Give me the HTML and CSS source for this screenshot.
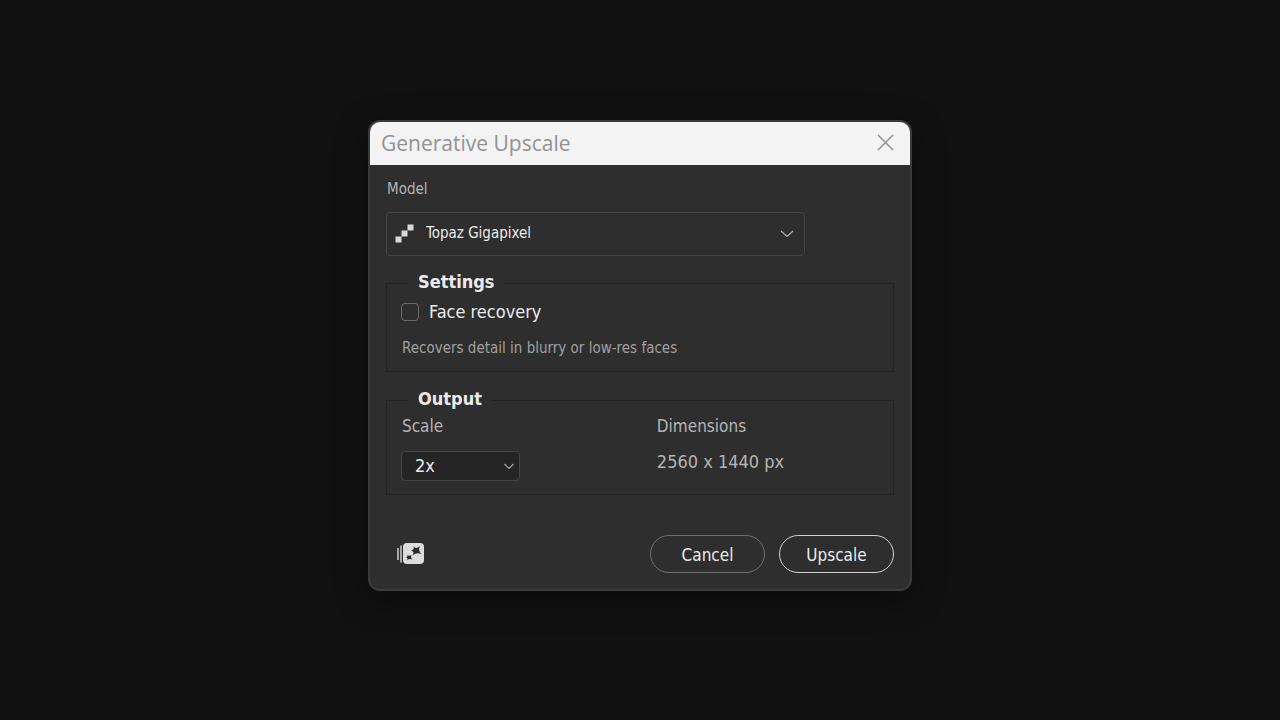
FILE: index.html
```html
<!DOCTYPE html>
<html lang="en">
<head>
  <meta charset="UTF-8">
  <meta name="viewport" content="width=device-width, initial-scale=1.0">
  <title>Generative Upscale</title>
  <link rel="stylesheet" href="styles.css">
</head>
<body>
  <form class="dialog" role="dialog" aria-labelledby="dialog-title">
    <div class="titlebar">
      <h1 id="dialog-title">Generative Upscale</h1>
      <button type="button" class="close" aria-label="Close">
        <svg width="17" height="17" viewBox="0 0 17 17"><path d="M1 1L16 16M16 1L1 16" fill="none" stroke="#929292" stroke-width="1.5"/></svg>
      </button>
    </div>
    <div class="content">
      <label class="model-label" for="model">Model</label>
      <div class="select model">
        <svg class="model-icon" width="20" height="20" viewBox="0 0 20 20" fill="#d8d8d8"><path d="M.5 13.5h6v6h-6zM6.5 7.500h6v6h-6zM12.500 1.500h6v6h-6z"/></svg>
        <select id="model">
          <option>Topaz Gigapixel</option>
        </select>
        <svg class="arrow" width="14" height="8" viewBox="0 0 14 8"><path d="M1 1L7 6.500L13 1" fill="none" stroke="#b4b4b4" stroke-width="1.1"/></svg>
      </div>

      <fieldset class="settings">
        <legend>Settings</legend>
        <div class="check">
          <input type="checkbox" id="face">
          <label for="face">Face recovery</label>
        </div>
        <p class="hint">Recovers detail in blurry or low-res faces</p>
      </fieldset>

      <fieldset class="output">
        <legend>Output</legend>
        <div class="columns">
          <div>
            <label for="scale">Scale</label>
            <div class="select scale">
              <select id="scale">
                <option>2x</option>
                <option>4x</option>
              </select>
              <svg class="arrow" width="10" height="6" viewBox="0 0 10 6"><path d="M.5 1L5 5.500L9.500 1" fill="none" stroke="#a8a8a8" stroke-width="1.1"/></svg>
            </div>
          </div>
          <div>
            <div>Dimensions</div>
            <div class="value">2560 x 1440 px</div>
          </div>
        </div>
      </fieldset>

      <div class="footer">
        <svg class="credits" width="28" height="22" viewBox="0 0 28 22">
          <path d="M1 5v12M4 2.500v17" fill="none" stroke="#cfcfcf" stroke-width="1.500"/>
          <rect x="6" y="0" width="21" height="21" rx="4" fill="#dcdcdc"/>
          <path d="M16.500 3.500Q19 6.500 23 3Q20.500 7.500 24.500 11Q19.500 9 15.500 12.500Q18 8.500 14 7.500Q17.500 7 16.500 3.500z" fill="#2b2b2b"/>
          <path d="M10.500 12Q12 13.500 14.500 12Q13.200 14 15 16.500Q12.300 15.300 10 17.500Q11.300 15 9 14.300Q11 14 10.500 12z" fill="#2b2b2b"/>
        </svg>
        <button type="button" class="btn">Cancel</button>
        <button type="submit" class="btn primary">Upscale</button>
      </div>
    </div>
  </form>
</body>
</html>
```
FILE: styles.css
```css
*{
  box-sizing: border-box;
}
body{
  margin: 0;
  min-height: 100vh;
  padding: 16px 16px 25px;
  display: flex;
  align-items: center;
  justify-content: center;
  background-color: #111;
  color: #b4b4b4;
  font: 17px/24px "DejaVu Sans Condensed", "DejaVu Sans", sans-serif;
}
.dialog{
  width: 100%;
  max-width: 544px;
  border: 2px solid #3b3b3b;
  border-radius: 12px;
  background-color: #2e2e2e;
  box-shadow: 0 8px 32px 0 rgba(0, 0, 0, .4);
  overflow: hidden;
}
.titlebar{
  height: 43px;
  padding: 0 16px 2px 11px;
  display: flex;
  align-items: center;
  justify-content: space-between;
  background-color: #f3f3f3;
}
.titlebar h1{
  margin: 0;
  font: 400 21px/32px "Open Sans", sans-serif;
  color: #929292;
}
.close{
  padding: 0;
  border: 0;
  background: none;
  cursor: pointer;
}
.close svg{
  display: block;
}
.content{
  padding: 14px 16px 16px;
}
.model-label{
  display: block;
  padding-left: 1px;
  font-size: 15px;
  line-height: 20px;
}
.select{
  position: relative;
}
.select select{
  appearance: none;
  width: 100%;
  height: 100%;
  border: 1px solid #454545;
  border-radius: 4px;
  background-color: transparent;
  color: #ebebeb;
  font: inherit;
}
.select .arrow{
  position: absolute;
  top: 50%;
  transform: translateY(-50%);
  pointer-events: none;
}
.model{
  width: 419px;
  max-width: 100%;
  height: 44px;
  margin-top: 13px;
  font-size: 15px;
}
.model select{
  padding: 0 32px 2px 39px;
}
.model .arrow{
  right: 11px;
}
.model-icon{
  position: absolute;
  left: 9px;
  top: 11px;
  pointer-events: none;
}
fieldset{
  min-width: 0;
  margin: 15px 0 0;
  padding: 5px 0 13px 14px;
  border: 1px solid #222;
}
legend{
  margin-left: 7px;
  padding: 0 10px 2px;
  color: #ebebeb;
  font-size: 18px;
  font-weight: 700;
  line-height: 22px;
}
.check{
  display: flex;
  align-items: center;
  gap: 10px;
  color: #ebebeb;
  font-size: 18px;
}
.check input{
  appearance: none;
  width: 18px;
  height: 18px;
  margin: 0;
  border: 1px solid #6a6a6a;
  border-radius: 4px;
}
.check input:checked{
  background-color: #d8d8d8;
}
.hint{
  margin: 14px 0 0;
  padding-left: 1px;
  font-size: 15px;
  line-height: 20px;
  color: #a0a0a0;
}
.output{
  margin-top: 16px;
  padding-top: 2px;
}
.columns{
  display: grid;
  grid-template-columns: 13fr 12fr;
}
.columns label{
  display: block;
  padding-left: 1px;
}
.scale{
  width: 119px;
  height: 30px;
  margin-top: 13px;
}
.scale select{
  padding: 0 24px 0 13px;
  background-color: #252525;
  font-size: 18px;
}
.scale .arrow{
  right: 6px;
}
.value{
  margin-top: 12px;
  font-size: 18px;
}
.footer{
  margin-top: 40px;
  display: flex;
  align-items: center;
  gap: 14px;
}
.credits{
  margin: 0 auto 0 11px;
}
.btn{
  width: 115px;
  height: 38px;
  padding: 2px 0 0;
  border: 1px solid #6e6e6e;
  border-radius: 19px;
  background: none;
  color: #ebebeb;
  font: inherit;
  cursor: pointer;
}
.btn.primary{
  border-color: #d0d0d0;
}
```
